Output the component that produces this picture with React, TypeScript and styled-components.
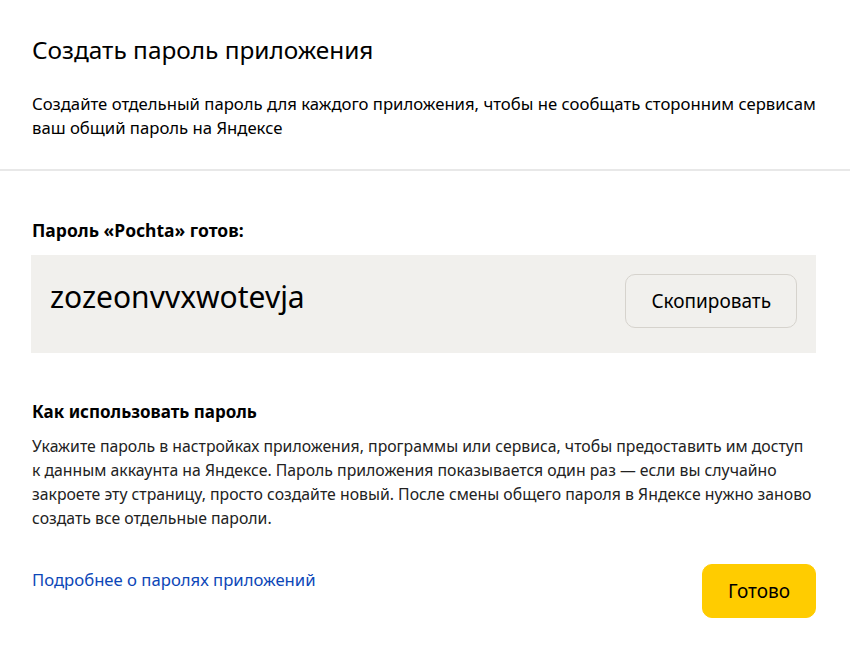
import React from 'react'
import styled, { createGlobalStyle } from 'styled-components'

const GlobalStyle = createGlobalStyle`
  html, body {
    margin: 0;
    padding: 0;
    background: #ffffff;
  }
  body {
    font-family: 'Noto Sans', 'Open Sans', Arial, sans-serif;
    color: #000000;
  }
  * {
    box-sizing: border-box;
  }
`

const Dialog = styled.div`
  width: 850px;
  height: 648px;
  background: #ffffff;
  display: flex;
  flex-direction: column;
`

const Header = styled.header`
  padding: 34px 32px 29px;
  border-bottom: 2px solid #e8e8e8;
`

const Title = styled.h1`
  margin: 0;
  font-size: 24.4px;
  font-weight: 400;
  line-height: 32px;
`

const Lead = styled.p`
  margin: 26px 0 0;
  max-width: 790px;
  font-size: 16.7px;
  line-height: 24px;
`

const Body = styled.section`
  padding: 47px 34px 0 31px;
  display: flex;
  flex-direction: column;
`

const Label = styled.h2`
  margin: 0 0 0 1px;
  font-size: 17.5px;
  font-weight: 700;
  line-height: 24px;
`

const PasswordBox = styled.div`
  margin-top: 13px;
  height: 98px;
  background: #f1f0ed;
  display: flex;
  align-items: center;
  justify-content: space-between;
  padding: 0 19px;
`

const PasswordText = styled.span`
  font-size: 30px;
  line-height: 36px;
  margin-top: -14px;
`

const Button = styled.button<{ $primary?: boolean }>`
  height: 54px;
  padding: 0 25px;
  border-radius: 10px;
  font-family: inherit;
  font-size: 19px;
  color: #000000;
  cursor: pointer;
  background: ${({ $primary }) => ($primary ? '#ffcc00' : 'transparent')};
  border: 1px solid ${({ $primary }) => ($primary ? '#ffcc00' : '#d6d3cd')};
  margin-top: ${({ $primary }) => ($primary ? '0' : '-6px')};
`

const HowTo = styled.div`
  margin-top: 47px;
  padding-left: 1px;
`

const Subtitle = styled.h3`
  margin: 0;
  font-size: 17px;
  font-weight: 700;
  line-height: 24px;
`

const Paragraph = styled.p`
  margin: 10px 0 0;
  max-width: 780px;
  font-size: 15.8px;
  line-height: 24px;
  color: #222222;
`

const Footer = styled.footer`
  margin-top: 34px;
  display: flex;
  justify-content: space-between;
  align-items: flex-start;
  padding-left: 1px;
`

const Link = styled.a`
  margin-top: 4px;
  font-size: 16.7px;
  line-height: 24px;
  color: #0d47b8;
  text-decoration: none;
`

function App(): JSX.Element {
  return (
    <>
      <GlobalStyle />
      <Dialog>
        <Header>
          <Title>Создать пароль приложения</Title>
          <Lead>
            Создайте отдельный пароль для каждого приложения, чтобы не сообщать
            сторонним сервисам ваш общий пароль на Яндексе
          </Lead>
        </Header>
        <Body>
          <Label>Пароль «Pochta» готов:</Label>
          <PasswordBox>
            <PasswordText>zozeonvvxwotevja</PasswordText>
            <Button type="button">Скопировать</Button>
          </PasswordBox>
          <HowTo>
            <Subtitle>Как использовать пароль</Subtitle>
            <Paragraph>
              Укажите пароль в настройках приложения, программы или сервиса,
              чтобы предоставить им доступ к данным аккаунта на Яндексе. Пароль
              приложения показывается один раз — если вы случайно закроете эту
              страницу, просто создайте новый. После смены общего пароля в
              Яндексе нужно заново создать все отдельные пароли.
            </Paragraph>
          </HowTo>
          <Footer>
            <Link href="#">Подробнее о паролях приложений</Link>
            <Button type="button" $primary>
              Готово
            </Button>
          </Footer>
        </Body>
      </Dialog>
    </>
  )
}

export default App
